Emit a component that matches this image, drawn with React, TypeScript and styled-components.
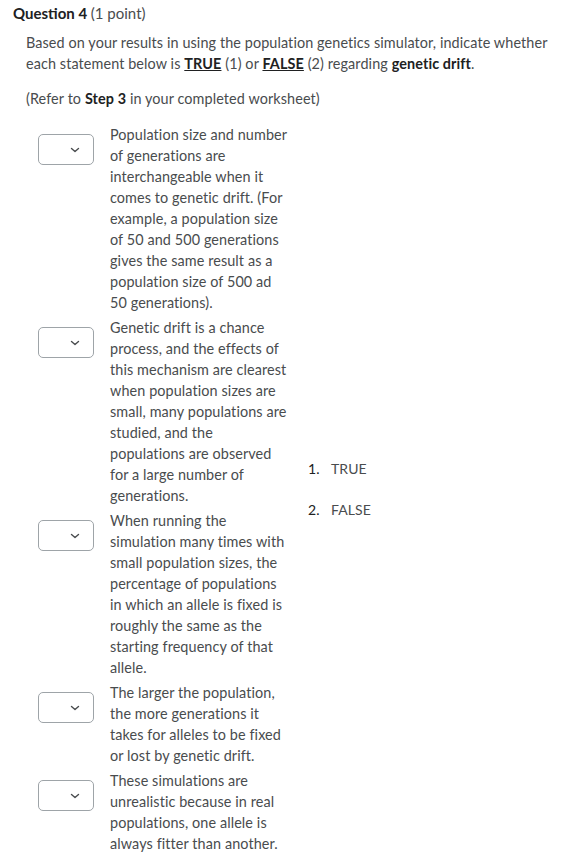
import React from "react";
import styled, { createGlobalStyle } from "styled-components";

const Global = createGlobalStyle`
  html, body { margin: 0; padding: 0; background: #fff; }
  body { font-family: Lato, "Open Sans", sans-serif; color: #494c4e; letter-spacing: 0.1px; }
`;

const Page = styled.div`
  padding: 4px 0 0 13px;
  width: 556px;
`;

const Title = styled.h2`
  margin: 0;
  font-size: 15px;
  line-height: 18px;
  font-weight: 700;
  color: #202122;
  letter-spacing: 0;
  span { font-weight: 400; color: #494c4e; }
`;

const Body = styled.div`
  padding: 10px 0 0 13px;
  font-size: 14.4px;
  line-height: 21px;
`;

const Para = styled.p`
  margin: 0 0 14px 0;
  b { font-weight: 700; color: #202122; }
  u { font-weight: 700; color: #202122; }
`;

const Matching = styled.div`
  display: flex;
  align-items: center;
  padding-left: 12px;
  margin-top: 15px;
`;

const Items = styled.div`
  display: flex;
  flex-direction: column;
  gap: 4px;
`;

const Item = styled.div`
  display: flex;
  align-items: flex-start;
`;

const Select = styled.div`
  box-sizing: border-box;
  width: 56px;
  height: 31px;
  margin-top: 10px;
  border: 1px solid #9ea4a8;
  border-radius: 5px;
  display: flex;
  align-items: center;
  justify-content: flex-end;
  padding-right: 13px;
  flex-shrink: 0;
`;

const Statement = styled.div`
  width: 180px;
  margin-left: 16px;
  margin-right: 3px;
`;

const Choices = styled.ol`
  margin: 0 0 0 15px;
  padding: 0;
  list-style: none;
  display: flex;
  flex-direction: column;
  gap: 20px;
`;

const Choice = styled.li`
  display: flex;
  font-size: 14px;
  line-height: 21px;
  span:first-child { width: 23px; color: #202122; }
`;

const Chevron = () => (
  <svg width="10" height="6" viewBox="0 0 10 6">
    <path d="M1.5 1.5 L5 4.5 L8.5 1.5" fill="none" stroke="#494c4e" strokeWidth="1.4" strokeLinecap="round" strokeLinejoin="round" />
  </svg>
);

const statements = [
  "Population size and number of generations are interchangeable when it comes to genetic drift. (For example, a population size of 50 and 500 generations gives the same result as a population size of 500 ad 50 generations).",
  "Genetic drift is a chance process, and the effects of this mechanism are clearest when population sizes are small, many populations are studied, and the populations are observed for a large number of generations.",
  "When running the simulation many times with small population sizes, the percentage of populations in which an allele is fixed is roughly the same as the starting frequency of that allele.",
  "The larger the population, the more generations it takes for alleles to be fixed or lost by genetic drift.",
  "These simulations are unrealistic because in real populations, one allele is always fitter than another.",
];

export default function App() {
  return (
    <>
      <Global />
      <Page>
        <Title>
          Question 4 <span>(1 point)</span>
        </Title>
        <Body>
          <Para>
            Based on your results in using the population genetics simulator, indicate whether each statement below is{" "}
            <u>TRUE</u> (1) or <u>FALSE</u> (2) regarding <b>genetic drift</b>.
          </Para>
          <Para>
            (Refer to <b>Step 3</b> in your completed worksheet)
          </Para>
          <Matching>
            <Items>
              {statements.map((s, i) => (
                <Item key={i}>
                  <Select>
                    <Chevron />
                  </Select>
                  <Statement>{s}</Statement>
                </Item>
              ))}
            </Items>
            <Choices>
              <Choice>
                <span>1.</span>
                <span>TRUE</span>
              </Choice>
              <Choice>
                <span>2.</span>
                <span>FALSE</span>
              </Choice>
            </Choices>
          </Matching>
        </Body>
      </Page>
    </>
  );
}
